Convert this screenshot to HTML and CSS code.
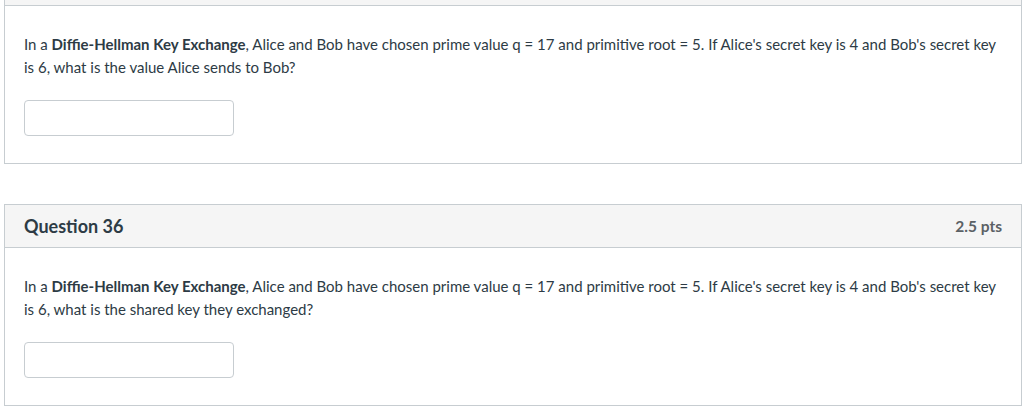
FILE: index.html
```html
<!DOCTYPE html>
<html>
<head>
<meta charset="utf-8">
<link rel="stylesheet" href="styles.css">
</head>
<body>
<div class="page">
  <div class="question">
    <div class="q-header"></div>
    <div class="q-body">
      <p class="q-text">In a <strong>Diffie-Hellman Key Exchange</strong>, Alice and Bob have chosen prime value q = 17 and primitive root = 5. If Alice's secret key is 4 and Bob's secret key is 6, what is the value Alice sends to Bob?</p>
      <input class="q-input" type="text">
    </div>
  </div>
  <div class="question">
    <div class="q-header">
      <span class="q-title">Question 36</span>
      <span class="q-pts">2.5 pts</span>
    </div>
    <div class="q-body">
      <p class="q-text">In a <strong>Diffie-Hellman Key Exchange</strong>, Alice and Bob have chosen prime value q = 17 and primitive root = 5. If Alice's secret key is 4 and Bob's secret key is 6, what is the shared key they exchanged?</p>
      <input class="q-input" type="text">
    </div>
  </div>
</div>
</body>
</html>
```
FILE: styles.css
```css
html, body {
  margin: 0;
  padding: 0;
  background: #ffffff;
}
body {
  font-family: Lato, "Liberation Sans", sans-serif;
  color: #2d3b45;
  overflow: hidden;
}
.page {
  margin: -38px 2px 0 4px;
  display: flex;
  flex-direction: column;
  gap: 40px;
}
.question {
  border: 1px solid #c7cdd1;
  background: #fff;
}
.q-header {
  height: 42px;
  background: #f5f5f5;
  border-bottom: 1px solid #c7cdd1;
  display: flex;
  align-items: center;
  justify-content: space-between;
  padding: 0 19px;
}
.q-title {
  font-size: 18px;
  font-weight: 700;
  color: #2d3b45;
}
.q-pts {
  font-size: 15.5px;
  font-weight: 700;
  color: #5b6165;
}
.q-body {
  padding: 27px 19px 27px 19px;
  display: flex;
  flex-direction: column;
  align-items: flex-start;
  gap: 21px;
}
.q-text {
  margin: 0;
  font-size: 15px;
  line-height: 23px;
}
.q-text strong {
  font-weight: 700;
}
.q-input {
  box-sizing: border-box;
  width: 210px;
  height: 36px;
  margin: 0;
  border: 1px solid #c7cdd1;
  border-radius: 4px;
  background: #fff;
  padding: 0 8px;
  font-family: inherit;
}
```
